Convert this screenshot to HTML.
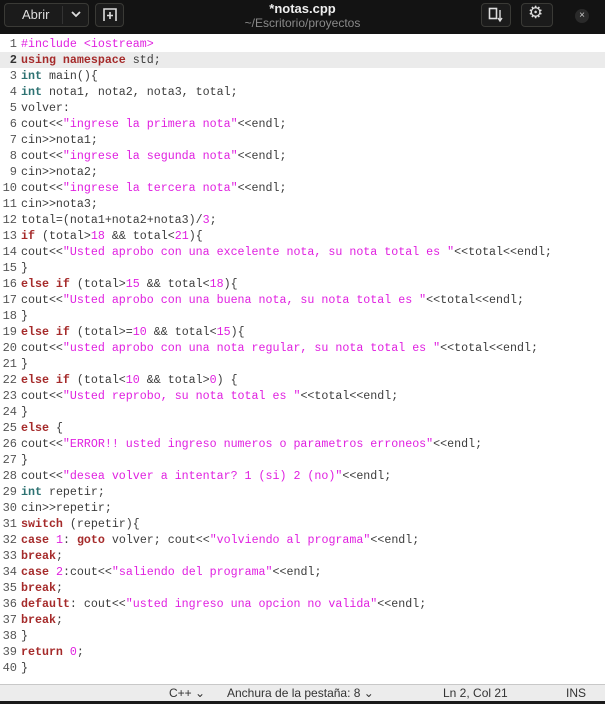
<!DOCTYPE html>
<html><head><meta charset="utf-8"><style>
body{margin:0;width:605px;height:704px;overflow:hidden;background:#fff;font-family:"Liberation Sans",sans-serif;position:relative}
.hdr{position:absolute;left:0;top:0;width:605px;height:34px;background:#131313}
.btn{position:absolute;border:1px solid #3a3a36;border-radius:4px;background:#1b1b1b;box-sizing:border-box}
.title{position:absolute;left:0;width:605px;text-align:center;color:#eee;font-weight:bold;font-size:13px;top:1px}
.sub{position:absolute;left:0;width:605px;text-align:center;color:#8a8a8a;font-size:12px;top:16px}
.code{position:absolute;left:0;top:36px;width:605px;font-family:"Liberation Mono",monospace;font-size:11.65px;color:#3c3c3c}
.l{height:16px;line-height:16px;white-space:pre;position:relative}
.n{display:inline-block;width:17px;text-align:right;color:#555;margin-right:4px;font-size:12px}
.cur{background:#ebebeb}
.k{color:#a52a2a;font-weight:bold}
.t{color:#2e7272;font-weight:bold}
.s{color:#e020e0}
.st{position:absolute;left:0;top:684px;width:605px;height:17px;background:#ececec;border-top:1px solid #c8c8c8;font-size:12px;color:#333}
.st span{position:absolute;top:1px}
.bot{position:absolute;left:0;top:701px;width:605px;height:3px;background:#1a1a1a}
</style></head><body>
<div class="hdr">
 <div class="btn" style="left:4px;top:3px;width:85px;height:24px"></div>
 <div style="position:absolute;left:62px;top:6px;width:1px;height:18px;background:#333"></div>
 <div style="position:absolute;left:22px;top:7px;color:#ddd;font-size:13px">Abrir</div>
 <svg style="position:absolute;left:70px;top:10px" width="12" height="8"><path d="M2 2 L6 6 L10 2" stroke="#ddd" stroke-width="1.8" fill="none"/></svg>
 <div class="btn" style="left:95px;top:3px;width:29px;height:24px"></div>
 <svg style="position:absolute;left:102px;top:7px" width="16" height="16"><path d="M2 14 V2 H14 V14" stroke="#ddd" stroke-width="1.6" fill="none"/><path d="M8 5 V12 M5 8.5 H11" stroke="#ddd" stroke-width="1.6"/></svg>
 <div class="title">*notas.cpp</div>
 <div class="sub">~/Escritorio/proyectos</div>
 <div class="btn" style="left:481px;top:3px;width:30px;height:24px"></div>
 <svg style="position:absolute;left:488px;top:7px" width="16" height="16"><rect x="1.5" y="1.5" width="7" height="10" stroke="#ddd" stroke-width="1.6" fill="none"/><path d="M12 3V13 M10 11 L12 14 L14 11" stroke="#ddd" stroke-width="1.4" fill="none"/></svg>
 <div class="btn" style="left:521px;top:3px;width:32px;height:24px"></div>
 <div style="position:absolute;left:528px;top:3px;color:#ddd;font-size:17px">⚙</div>
 <div style="position:absolute;left:575px;top:9px;width:14px;height:14px;border-radius:7px;background:#2a2a2a;color:#ccc;font-size:10px;text-align:center;line-height:13px">×</div>
</div>
<div class="code">
<div class="l"><span class="n">1</span><span class="s">#include &lt;iostream&gt;</span></div>
<div class="l cur"><span class="n" style="font-weight:bold;color:#333">2</span><span class="k">using namespace</span> std;</div>
<div class="l"><span class="n">3</span><span class="t">int</span> main(){</div>
<div class="l"><span class="n">4</span><span class="t">int</span> nota1, nota2, nota3, total;</div>
<div class="l"><span class="n">5</span>volver:</div>
<div class="l"><span class="n">6</span>cout&lt;&lt;<span class="s">"ingrese la primera nota"</span>&lt;&lt;endl;</div>
<div class="l"><span class="n">7</span>cin&gt;&gt;nota1;</div>
<div class="l"><span class="n">8</span>cout&lt;&lt;<span class="s">"ingrese la segunda nota"</span>&lt;&lt;endl;</div>
<div class="l"><span class="n">9</span>cin&gt;&gt;nota2;</div>
<div class="l"><span class="n">10</span>cout&lt;&lt;<span class="s">"ingrese la tercera nota"</span>&lt;&lt;endl;</div>
<div class="l"><span class="n">11</span>cin&gt;&gt;nota3;</div>
<div class="l"><span class="n">12</span>total=(nota1+nota2+nota3)/<span class="s">3</span>;</div>
<div class="l"><span class="n">13</span><span class="k">if</span> (total&gt;<span class="s">18</span> &amp;&amp; total&lt;<span class="s">21</span>){</div>
<div class="l"><span class="n">14</span>cout&lt;&lt;<span class="s">"Usted aprobo con una excelente nota, su nota total es "</span>&lt;&lt;total&lt;&lt;endl;</div>
<div class="l"><span class="n">15</span>}</div>
<div class="l"><span class="n">16</span><span class="k">else if</span> (total&gt;<span class="s">15</span> &amp;&amp; total&lt;<span class="s">18</span>){</div>
<div class="l"><span class="n">17</span>cout&lt;&lt;<span class="s">"Usted aprobo con una buena nota, su nota total es "</span>&lt;&lt;total&lt;&lt;endl;</div>
<div class="l"><span class="n">18</span>}</div>
<div class="l"><span class="n">19</span><span class="k">else if</span> (total&gt;=<span class="s">10</span> &amp;&amp; total&lt;<span class="s">15</span>){</div>
<div class="l"><span class="n">20</span>cout&lt;&lt;<span class="s">"usted aprobo con una nota regular, su nota total es "</span>&lt;&lt;total&lt;&lt;endl;</div>
<div class="l"><span class="n">21</span>}</div>
<div class="l"><span class="n">22</span><span class="k">else if</span> (total&lt;<span class="s">10</span> &amp;&amp; total&gt;<span class="s">0</span>) {</div>
<div class="l"><span class="n">23</span>cout&lt;&lt;<span class="s">"Usted reprobo, su nota total es "</span>&lt;&lt;total&lt;&lt;endl;</div>
<div class="l"><span class="n">24</span>}</div>
<div class="l"><span class="n">25</span><span class="k">else</span> {</div>
<div class="l"><span class="n">26</span>cout&lt;&lt;<span class="s">"ERROR!! usted ingreso numeros o parametros erroneos"</span>&lt;&lt;endl;</div>
<div class="l"><span class="n">27</span>}</div>
<div class="l"><span class="n">28</span>cout&lt;&lt;<span class="s">"desea volver a intentar? 1 (si) 2 (no)"</span>&lt;&lt;endl;</div>
<div class="l"><span class="n">29</span><span class="t">int</span> repetir;</div>
<div class="l"><span class="n">30</span>cin&gt;&gt;repetir;</div>
<div class="l"><span class="n">31</span><span class="k">switch</span> (repetir){</div>
<div class="l"><span class="n">32</span><span class="k">case</span> <span class="s">1</span>: <span class="k">goto</span> volver; cout&lt;&lt;<span class="s">"volviendo al programa"</span>&lt;&lt;endl;</div>
<div class="l"><span class="n">33</span><span class="k">break</span>;</div>
<div class="l"><span class="n">34</span><span class="k">case</span> <span class="s">2</span>:cout&lt;&lt;<span class="s">"saliendo del programa"</span>&lt;&lt;endl;</div>
<div class="l"><span class="n">35</span><span class="k">break</span>;</div>
<div class="l"><span class="n">36</span><span class="k">default</span>: cout&lt;&lt;<span class="s">"usted ingreso una opcion no valida"</span>&lt;&lt;endl;</div>
<div class="l"><span class="n">37</span><span class="k">break</span>;</div>
<div class="l"><span class="n">38</span>}</div>
<div class="l"><span class="n">39</span><span class="k">return</span> <span class="s">0</span>;</div>
<div class="l"><span class="n">40</span>}</div>
</div>
<div class="st">
 <span style="left:169px">C++ ⌄</span>
 <span style="left:227px">Anchura de la pestaña: 8 ⌄</span>
 <span style="left:443px">Ln 2, Col 21</span>
 <span style="left:566px">INS</span>
</div>
<div class="bot"></div>
</body></html>
